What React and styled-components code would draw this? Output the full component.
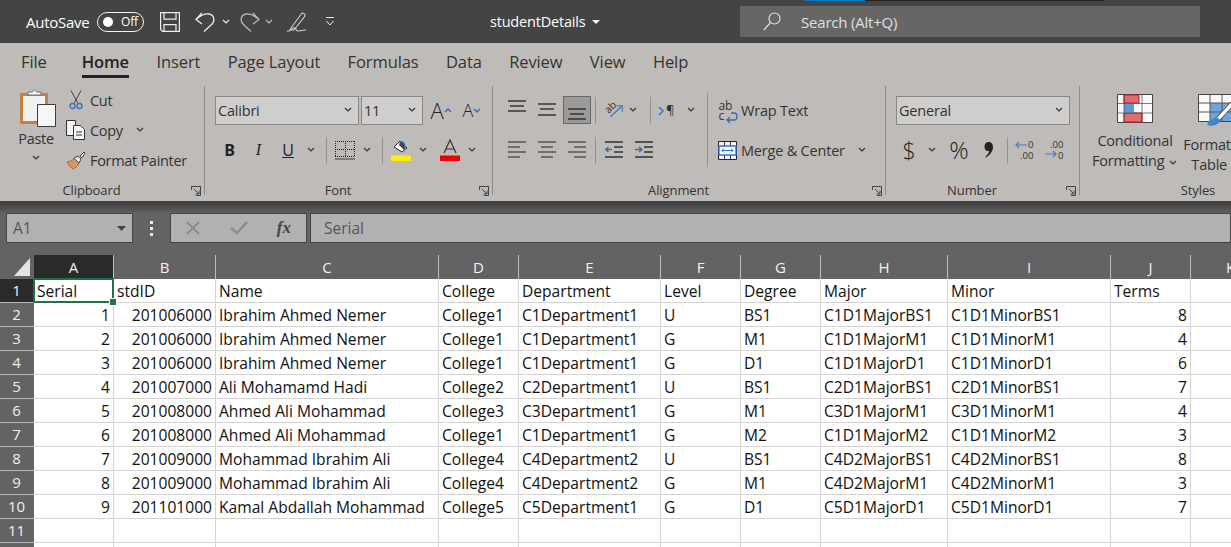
import React from "react";
import styled, { createGlobalStyle } from "styled-components";

const UI_FONT = `"Open Sans", "Noto Sans", "Liberation Sans", sans-serif`;

const GlobalStyle = createGlobalStyle`
  html, body { margin: 0; padding: 0; background: #fff; overflow: hidden; }
  body { font-family: ${UI_FONT}; }
  * { box-sizing: border-box; }
`;

const Page = styled.div`
  width: 1231px;
  height: 547px;
  overflow: hidden;
  position: relative;
`;

/* ---------- title bar ---------- */
const TitleBar = styled.div`
  height: 43px;
  background: #444444;
  color: #fff;
  display: flex;
  align-items: center;
  padding-left: 26px;
  position: relative;
`;
const ProgressStrip = styled.div`
  position: absolute;
  top: 0;
  left: 805px;
  width: 299px;
  height: 1px;
  background: linear-gradient(90deg, #0078d4 0 60px, #222 60px);
`;
const AutoSave = styled.span`
  font-size: 15px;
  width: 71px;
  letter-spacing: -0.25px;
`;
const Toggle = styled.div`
  width: 47px;
  height: 20px;
  border: 1.5px solid #f2f2f2;
  border-radius: 10px;
  display: flex;
  align-items: center;
  padding-left: 5px;
  gap: 8px;
  font-size: 12px;
  letter-spacing: -0.2px;
  &::before {
    content: "";
    width: 10px;
    height: 10px;
    border-radius: 50%;
    background: #fff;
  }
`;
const QuickIcon = styled.div`
  display: flex;
  align-items: center;
  justify-content: center;
  flex: none;
  width: ${(p) => p.$w}px;
  margin-left: ${(p) => p.$ml || 0}px;
`;
const FileName = styled.span`
  margin-left: 155px;
  font-size: 14.5px;
  width: 95px;
  white-space: nowrap;
  letter-spacing: -0.2px;
`;
const Caret = styled.span`
  width: 0;
  height: 0;
  border: 4px solid transparent;
  border-top: 4px solid #fff;
  border-bottom: 0;
  margin-left: 7px;
`;
const SearchBox = styled.div`
  margin-left: 140px;
  width: 460px;
  height: 31px;
  background: #666666;
  color: #e0e0e0;
  display: flex;
  align-items: center;
  padding-left: 23px;
  gap: 20px;
  font-size: 15px;
  letter-spacing: -0.2px;
`;

/* ---------- tabs ---------- */
const TabBar = styled.div`
  height: 37px;
  background: #bfbbb8;
  display: flex;
  padding-left: 21px;
  gap: 27.4px;
`;
const Tab = styled.div`
  height: 35px;
  padding-top: 8px;
  font-size: 16.5px;
  line-height: 22px;
  color: ${(p) => (p.$active ? "#222" : "#333")};
  font-weight: ${(p) => (p.$active ? 600 : 400)};
  letter-spacing: -0.1px;
  margin-left: ${(p) => p.$ml || 0}px;
  border-bottom: ${(p) => (p.$active ? "3px solid #222" : "0")};
`;

/* ---------- ribbon ---------- */
const Ribbon = styled.div`
  height: 121px;
  background: #bfbbb8;
  display: flex;
  padding-top: 6px;
  color: #333;
`;
const Group = styled.div`
  width: ${(p) => p.$w}px;
  flex: none;
  position: relative;
  &::after {
    content: "";
    position: absolute;
    right: 0;
    top: 0;
    width: 1px;
    height: 109px;
    background: ${(p) => (p.$last ? "transparent" : "#8f8c8a")};
  }
`;
const GroupBody = styled.div`
  height: 95px;
  display: flex;
  padding-left: ${(p) => p.$pl || 0}px;
`;
const GroupLabel = styled.div`
  height: 18px;
  line-height: 18px;
  font-size: 13px;
  text-align: center;
  color: #333;
  letter-spacing: -0.1px;
  padding-right: ${(p) => p.$pr || 0}px;
`;
const Launcher = styled.div`
  position: absolute;
  right: 4px;
  bottom: 5px;
  width: 10px;
  height: 10px;
  display: flex;
`;
const PasteColumn = styled.div`
  width: 36px;
  margin-left: 18px;
  display: flex;
  flex-direction: column;
  align-items: center;
  padding-top: 3px;
  font-size: 14.5px;
  letter-spacing: -0.3px;
  svg.big { margin-left: 4px; flex: none; }
  span { margin: 2px 0 6px; line-height: 20px; }
`;
const ClipList = styled.div`
  margin: -1px 0 0 11px;
  display: flex;
  flex-direction: column;
`;
const ClipRow = styled.div`
  height: 30px;
  display: flex;
  align-items: center;
  gap: 3px;
  font-size: 14.5px;
  letter-spacing: -0.3px;
`;
const ClipIcon = styled.div`
  width: 22px;
  display: flex;
  justify-content: center;
`;
const Stack = styled.div`
  display: flex;
  flex-direction: column;
  gap: 12px;
  padding-top: 10px;
`;
const ToolRow = styled.div`
  height: 28px;
  display: flex;
  align-items: center;
`;
const Slot = styled.div`
  flex: none;
  width: ${(p) => p.$w}px;
  height: 28px;
  margin-left: ${(p) => p.$ml || 0}px;
  display: flex;
  align-items: center;
  justify-content: center;
  color: #222;
  background: ${(p) => (p.$on ? "#9c9a98" : "transparent")};
  border: ${(p) => (p.$on ? "1px solid #6a6866" : "0")};
`;
const BoldGlyph = styled.span`
  font-size: 16px;
  font-family: ${(p) => (p.$i ? `"Liberation Serif", serif` : UI_FONT)};
  font-style: ${(p) => (p.$i ? "italic" : "normal")};
  text-decoration: ${(p) => (p.$u ? "underline" : "none")};
  font-weight: ${(p) => (p.$u || p.$i ? 400 : 700)};
`;
const BigGlyph = styled.span`
  font-size: ${(p) => p.$s}px;
  line-height: 1;
  font-weight: 300;
`;
const ToolSep = styled.div`
  flex: none;
  width: 1px;
  height: 27px;
  background: #959290;
  margin-left: ${(p) => p.$ml || 0}px;
`;
const TallSep = styled.div`
  flex: none;
  width: 1px;
  height: 74px;
  margin: 7px 0 0 4px;
  background: #959290;
`;
const Select = styled.div`
  flex: none;
  width: ${(p) => p.$w}px;
  margin-left: ${(p) => p.$ml || 0}px;
  height: 29px;
  background: #cfcecc;
  border: 1px solid #8a8886;
  display: flex;
  align-items: center;
  justify-content: space-between;
  padding: 0 5px 0 2px;
  font-size: 14.5px;
  letter-spacing: -0.2px;
  color: #333;
`;
const WideButton = styled.div`
  height: 28px;
  display: flex;
  align-items: center;
  font-size: 14.5px;
  letter-spacing: -0.2px;
  color: #333;
`;
const WideIcon = styled.div`
  width: 22px;
  margin: 0 2px 0 9px;
  display: flex;
  justify-content: center;
`;
const WideColumn = styled.div`
  display: flex;
  flex-direction: column;
  gap: 12px;
  padding-top: 10px;
`;
const StyleButton = styled.div`
  flex: none;
  width: ${(p) => p.$w}px;
  margin-left: ${(p) => p.$ml || 0}px;
  display: flex;
  flex-direction: column;
  align-items: center;
  font-size: 14.5px;
  line-height: 20px;
  white-space: nowrap;
  letter-spacing: -0.2px;
  padding-top: 8px;
  svg.big { margin-bottom: 8px; }
`;

/* ---------- formula bar ---------- */
const FormulaBar = styled.div`
  height: 54px;
  padding: 12px 0 0 6px;
  display: flex;
  align-items: flex-start;
  background: linear-gradient(#3c3c3c 0, #5c5c5c 11px, #636363 12px);
`;
const FormulaBox = styled.div`
  height: 30px;
  background: #b1b1b1;
  border: 1px solid #444;
  display: flex;
  align-items: center;
  color: #555;
  font-size: 15.5px;
  flex: ${(p) => (p.$grow ? 1 : "none")};
  width: ${(p) => (p.$w ? `${p.$w}px` : "auto")};
  margin-left: ${(p) => p.$ml || 0}px;
  padding: 0 ${(p) => p.$pr || 6}px 0 ${(p) => p.$pl || 6}px;
  justify-content: ${(p) => p.$justify || "flex-start"};
`;
const Dots = styled.div`
  width: 37px;
  height: 30px;
  display: flex;
  flex-direction: column;
  align-items: center;
  justify-content: center;
  gap: 3px;
  i { width: 3px; height: 3px; background: #eee; display: block; }
`;
const FxGlyph = styled.span`
  font: italic 700 17px "Liberation Serif", serif;
  color: #444;
`;

/* ---------- sheet ---------- */
const COLS = [
  ["A", 80], ["B", 102], ["C", 223], ["D", 80], ["E", 142], ["F", 80],
  ["G", 80], ["H", 127], ["I", 163], ["J", 80], ["K", 80],
];

const Sheet = styled.div`
  display: grid;
  grid-template-columns: 34px ${COLS.map((c) => `${c[1]}px`).join(" ")};
  grid-auto-rows: 24px;
  background: #fff;
  font-size: 15.6px;
`;
const Corner = styled.div`
  background: #636363;
  position: relative;
  &::after {
    content: "";
    position: absolute;
    left: 14px;
    top: 3px;
    width: 16px;
    height: 18px;
    background: #e4e4e4;
    clip-path: polygon(100% 0, 100% 100%, 0 100%);
  }
`;
const ColHead = styled.div`
  background: ${(p) => (p.$on ? "#2a2a2a" : "#636363")};
  color: #f0f0f0;
  border-right: 1px solid #bdbdbd;
  text-align: center;
  line-height: 24px;
  font-size: 15px;
`;
const RowHead = styled.div`
  background: ${(p) => (p.$on ? "#2a2a2a" : "#636363")};
  color: #f0f0f0;
  border-bottom: 1px solid #b8b8b8;
  text-align: center;
  line-height: 23px;
  font-size: 15px;
  padding-right: 1px;
`;
const Cell = styled.div`
  border-right: 1px solid #d4d4d4;
  border-bottom: 1px solid #d4d4d4;
  line-height: 24px;
  padding: 0 3px;
  white-space: nowrap;
  overflow: hidden;
  color: #111;
  text-align: ${(p) => (p.$num ? "right" : "left")};
`;
const SelectedCell = styled(Cell)`
  position: relative;
  overflow: visible;
  z-index: 1;
  &::before {
    content: "";
    position: absolute;
    left: -1px;
    top: -1px;
    right: -1px;
    bottom: -1px;
    border: 2px solid #217346;
  }
  &::after {
    content: "";
    position: absolute;
    right: -3px;
    bottom: -3px;
    width: 6px;
    height: 6px;
    background: #217346;
    border: 1px solid #fff;
    box-sizing: content-box;
    margin: -1px;
  }
`;

/* ---------- icons ---------- */
const Chev = ({ c = "#333" }) => (
  <svg width="10" height="6" viewBox="0 0 10 6"><path d="M2 1l3 3 3-3" fill="none" stroke={c} strokeWidth="1.2" /></svg>
);
const LaunchIcon = () => (
  <svg width="10" height="10" viewBox="0 0 10 10"><path d="M.5 4V.5h9v9H5M3 3l5 5M8 4.5V8H4.5" fill="none" stroke="#444" /></svg>
);
const SaveIcon = () => (
  <svg width="20" height="20" viewBox="0 0 20 20" fill="none" stroke="#eee" strokeWidth="1.2"><path d="M.6.6h18.8v18.8H2.6l-2-2zM4 .6v6.6h12V.6M4 19.4v-6.8h12v6.8" /></svg>
);
const UndoIcon = ({ c = "#eee", flip }) => (
  <svg width="20" height="20" viewBox="0 0 20 20" fill="none" stroke={c} strokeWidth="1.3" transform={flip ? "scale(-1 1)" : undefined}>
    <path d="M1 7.500C5 4 10 1.500 14 2c6 1 6 8 2 11l-7 6.500M7 1L1 7.500 7 12" />
  </svg>
);
const PenIcon = () => (
  <svg width="21" height="20" viewBox="0 0 21 20" fill="none" stroke="#ccc" strokeWidth="1.1">
    <path d="M5 16L16 1c2 0 3 1 3 3L8 18H4zM1 19c4 1 5-4 8-3 2 1 0 3 3 3 2 0 3-1 8-1" />
  </svg>
);
const CustomizeIcon = () => (
  <svg width="10" height="9" viewBox="0 0 10 9"><path d="M1 .5h8" stroke="#eee" /><path d="M1.500 4l3.500 4 3.500-4" fill="none" stroke="#eee" /></svg>
);
const SearchIcon = () => (
  <svg width="18" height="19" viewBox="0 0 18 19" fill="none" stroke="#ddd" strokeWidth="1.2"><circle cx="11.5" cy="6.5" r="5.5" /><path d="M7.500 10.500L.8 18" /></svg>
);
const PasteIcon = () => (
  <svg className="big" width="36" height="38" viewBox="0 0 36 38">
    <path d="M1.500 5.500h25v28h-25z" fill="#eff2f0" stroke="#c57f45" strokeWidth="3" />
    <path d="M8 6V3h4.500c0-2.500 4-2.500 4 0H21v3z" fill="#fafafa" stroke="#6e6e6e" />
    <path d="M17.500 15.500h18v22h-18z" fill="#f5f7f6" stroke="#3c3c3c" />
  </svg>
);
const CutIcon = () => (
  <svg width="14" height="20" viewBox="0 0 14 20" fill="none">
    <path d="M2 .5l7 13M12 .5l-7 13" stroke="#444" />
    <circle cx="3.500" cy="16" r="2.500" stroke="#3a74bb" strokeWidth="1.4" />
    <circle cx="10.500" cy="16" r="2.500" stroke="#3a74bb" strokeWidth="1.4" />
  </svg>
);
const CopyIcon = () => (
  <svg width="20" height="20" viewBox="0 0 20 20" fill="#f4f4f4" stroke="#333">
    <path d="M.5.5h9v15h-9z" />
    <path d="M7.500 5.500h7l4 4v10h-11z" />
    <path d="M10 12h6M10 15h6" />
  </svg>
);
const BrushIcon = () => (
  <svg width="20" height="19" viewBox="0 0 20 19">
    <path d="M1 11c3 0 6-2 7-4l5 5c-1 3-4 5-6 6-1-1-2-1-3-3-1 0-2-2-3-4z" fill="#d29a62" stroke="#a86a30" />
    <path d="M8 7l4-2 3 3-2 4z" fill="#f3f3f3" stroke="#444" />
    <path d="M14 5l4-4 1 1-3 5z" fill="#f3f3f3" stroke="#444" />
  </svg>
);
const GrowIcon = ({ up }) => (
  <svg width="8" height="5" viewBox="0 0 8 5"><path d={up ? "M1 4l3-3 3 3" : "M1 1l3 3 3-3"} fill="none" stroke="#2f6db3" strokeWidth="1.3" /></svg>
);
const BordersIcon = () => (
  <svg width="20" height="19" viewBox="0 0 20 19" fill="none" stroke="#222">
    <path d="M0 .5h20M0 15.500h20M.5 0v16M19.500 0v16M10.500 0v16M0 8.500h20" strokeDasharray="1 1" />
    <path d="M0 18h20" strokeWidth="1.500" stroke="#666" />
  </svg>
);
const FillIcon = () => (
  <svg width="20" height="22" viewBox="0 0 20 22">
    <path d="M3 8l6-6 7 7-5 4z" fill="#fff" stroke="#222" />
    <path d="M9 2l6 6-2 3-5-5z" fill="#444" />
    <path d="M14 8c0-4-3-6-5-5" fill="none" stroke="#2f6db3" strokeWidth="1.400" />
    <path d="M0 16.500h20V22H0z" fill="#ffee00" />
  </svg>
);
const ColorAIcon = () => (
  <svg width="20" height="22" viewBox="0 0 20 22">
    <path d="M4 14L10 1l6 13M6 10h8" fill="none" stroke="#333" strokeWidth="1.200" />
    <path d="M0 16.500h20V22H0z" fill="#f00000" />
  </svg>
);
const CommaIcon = () => (
  <svg width="10" height="16" viewBox="0 0 10 16"><path d="M4.500 0C7.500 0 9 2 9 5c0 4-3 8-7 10.500l-.6-.8C3.500 12.500 5 11 5.300 9 2.500 9.500.5 7.500.5 4.700.5 2 2.300 0 4.500 0z" fill="#222" /></svg>
);
const Lines = ({ ys, c = "#222", inset = [] }) => (
  <svg width="19" height="20" viewBox="0 0 19 20" stroke={c} strokeWidth="1.300">
    {ys.map((y, i) => <path key={y} d={`M${inset[i] ? inset[i][0] : 0} ${y}H${inset[i] ? inset[i][1] : 18}`} />)}
  </svg>
);
const OrientIcon = () => (
  <svg width="26" height="26" viewBox="0 0 26 26" fill="none">
    <path d="M10 21L24 8M17 8h7v7" stroke="#3a74bb" strokeWidth="1.300" />
    <text x="10" y="14" fontSize="12" fill="#333" textAnchor="middle" transform="rotate(-45 10 10)" fontFamily="Open Sans">ab</text>
  </svg>
);
const IndentLines = ({ flip }) => (
  <svg width="19" height="18" viewBox="0 0 19 18" fill="none">
    <path d="M0 1h18M9 6h9M9 11h9M0 16h18" stroke="#333" strokeWidth="1.300" />
    <path d={flip ? "M0 8.500h6M4 6l3 2.500L4 11" : "M7 8.500H1M3.500 6L.8 8.500 3.500 11"} stroke="#2f6db3" strokeWidth="1.300" />
  </svg>
);
const ParaIcon = () => (
  <svg width="20" height="22" viewBox="0 0 20 22" fill="none">
    <path d="M1 8l4 4-4 4" stroke="#2f7ad1" strokeWidth="1.500" />
    <text x="8" y="16" fontSize="13" fill="#333" fontFamily="Open Sans">¶</text>
  </svg>
);
const WrapIcon = () => (
  <svg width="22" height="28" viewBox="0 0 22 28" fill="none">
    <text fontSize="12" fill="#333" fontFamily="Open Sans">
      <tspan x="1.500" y="14">ab</tspan>
      <tspan x="1.500" y="24">c</tspan>
    </text>
    <path d="M14 17h3c4 0 4 7 0 7h-7M13 21l-3 3 3 3" stroke="#2f6db3" strokeWidth="1.300" />
  </svg>
);
const MergeIcon = () => (
  <svg width="20" height="19" viewBox="0 0 20 19">
    <path d="M.5.500h18v18H.5z" fill="#f3f5f6" stroke="#222" />
    <path d="M6.500 0v5M12.500 0v5M6.500 14v5M12.500 14v5" stroke="#333" />
    <path d="M1 5h17v9H1z" fill="#fbfdff" stroke="#2f74c4" strokeWidth="1.400" />
    <path d="M4 9.500h11M6 7.500l-2 2 2 2M13 7.500l2 2-2 2" fill="none" stroke="#2f74c4" />
  </svg>
);
const DecimalIcon = ({ more }) => (
  <svg width="24" height="26" viewBox="0 0 24 26" fill="none">
    <text x={more ? 7 : 15} y="11" fontSize="9.500" fill="#333" fontFamily="Open Sans">{more ? ".00" : "0"}</text>
    <text x={more ? 15 : 7} y="22" fontSize="9.500" fill="#333" fontFamily="Open Sans">{more ? "0" : ".00"}</text>
    <path d={more ? "M2 17h11M10 14l3 3-3 3" : "M14 8H3M6 5L3 8l3 3"} stroke="#3a7cd0" strokeWidth="1.200" />
  </svg>
);
const ConditionalIcon = () => (
  <svg className="big" width="36" height="29" viewBox="0 0 36 29">
    <path d="M.5.500h35v28H.5z" fill="#fafafa" stroke="#444" />
    <path d="M7 1h15v8H7zM7 19h18v9H7z" fill="#e06c6c" stroke="#b81f1f" />
    <path d="M7 10h10v9H7z" fill="#5b9bd5" />
    <path d="M7 0v29M25 0v29M0 9.500h36M0 19h36" stroke="#444" strokeOpacity=".7" />
  </svg>
);
const FormatTableIcon = () => (
  <svg className="big" width="36" height="33" viewBox="0 0 36 33">
    <path d="M.5.500h34v27H.5z" fill="#fafafa" stroke="#444" />
    <path d="M12 9h23v18H12z" fill="#6ca6dc" />
    <path d="M12 0v28M24 0v28M0 9h35M0 18h35" stroke="#555" />
    <path d="M12 30c1-4 4-5 7-7l14-15 3 3-14 15c-2 4-6 6-10 4z" fill="#fff" stroke="#444" />
    <path d="M9 31c2-5 6-7 10-8l3 3c-2 4-8 7-13 5z" fill="#3a8ad0" />
  </svg>
);
const CancelIcon = () => (
  <svg width="16" height="16" viewBox="0 0 16 16"><path d="M2 2l12 12M14 2L2 14" stroke="#8c8c8c" strokeWidth="2" /></svg>
);
const CheckIcon = () => (
  <svg width="18" height="14" viewBox="0 0 18 14"><path d="M1 7l6 5L17 1" fill="none" stroke="#8c8c8c" strokeWidth="2.500" /></svg>
);
const DropArrow = () => (
  <svg width="9" height="5" viewBox="0 0 9 5"><path d="M0 0h9L4.500 5z" fill="#444" /></svg>
);

/* ---------- data ---------- */
const DATA = [
  [1, 201006000, "Ibrahim Ahmed Nemer", "College1", "C1Department1", "U", "BS1", "C1D1MajorBS1", "C1D1MinorBS1", 8],
  [2, 201006000, "Ibrahim Ahmed Nemer", "College1", "C1Department1", "G", "M1", "C1D1MajorM1", "C1D1MinorM1", 4],
  [3, 201006000, "Ibrahim Ahmed Nemer", "College1", "C1Department1", "G", "D1", "C1D1MajorD1", "C1D1MinorD1", 6],
  [4, 201007000, "Ali Mohamamd Hadi", "College2", "C2Department1", "U", "BS1", "C2D1MajorBS1", "C2D1MinorBS1", 7],
  [5, 201008000, "Ahmed Ali Mohammad", "College3", "C3Department1", "G", "M1", "C3D1MajorM1", "C3D1MinorM1", 4],
  [6, 201008000, "Ahmed Ali Mohammad", "College1", "C1Department1", "G", "M2", "C1D1MajorM2", "C1D1MinorM2", 3],
  [7, 201009000, "Mohammad Ibrahim Ali", "College4", "C4Department2", "U", "BS1", "C4D2MajorBS1", "C4D2MinorBS1", 8],
  [8, 201009000, "Mohammad Ibrahim Ali", "College4", "C4Department2", "G", "M1", "C4D2MajorM1", "C4D2MinorM1", 3],
  [9, 201101000, "Kamal Abdallah Mohammad", "College5", "C5Department1", "G", "D1", "C5D1MajorD1", "C5D1MinorD1", 7],
];
const HEADERS = ["Serial", "stdID", "Name", "College", "Department", "Level", "Degree", "Major", "Minor", "Terms", ""];
const TABS = ["File", "Home", "Insert", "Page Layout", "Formulas", "Data", "Review", "View", "Help"];

const TOP = [[0, 18], [2, 16], [0, 18]];
const ALIGN_V = {
  top: [1, 6, 11],
  mid: [4, 9, 15],
  bot: [9, 14, 19],
};

export default function App() {
  return (
    <Page>
      <GlobalStyle />
      <TitleBar>
        <ProgressStrip />
        <AutoSave>AutoSave</AutoSave>
        <Toggle>Off</Toggle>
        <QuickIcon $w={20} $ml={16}><SaveIcon /></QuickIcon>
        <QuickIcon $w={20} $ml={15}><UndoIcon /></QuickIcon>
        <QuickIcon $w={10} $ml={6}><Chev c="#eee" /></QuickIcon>
        <QuickIcon $w={20} $ml={9}><UndoIcon c="#bbb" flip /></QuickIcon>
        <QuickIcon $w={10} $ml={4}><Chev c="#bbb" /></QuickIcon>
        <QuickIcon $w={21} $ml={12}><PenIcon /></QuickIcon>
        <QuickIcon $w={10} $ml={18}><CustomizeIcon /></QuickIcon>
        <FileName>studentDetails</FileName>
        <Caret />
        <SearchBox><SearchIcon />Search (Alt+Q)</SearchBox>
      </TitleBar>

      <TabBar>
        {TABS.map((t) => <Tab key={t} $active={t === "Home"} $ml={t === "Home" ? 7.6 : 0}>{t}</Tab>)}
      </TabBar>

      <Ribbon>
        <Group $w={205}>
          <GroupBody>
            <PasteColumn>
              <PasteIcon />
              <span>Paste</span>
              <Chev />
            </PasteColumn>
            <ClipList>
              <ClipRow><ClipIcon><CutIcon /></ClipIcon>Cut</ClipRow>
              <ClipRow><ClipIcon><CopyIcon /></ClipIcon>Copy<QuickIcon $w={10} $ml={9}><Chev /></QuickIcon></ClipRow>
              <ClipRow><ClipIcon><BrushIcon /></ClipIcon>Format Painter</ClipRow>
            </ClipList>
          </GroupBody>
          <GroupLabel $pr={22}>Clipboard</GroupLabel>
          <Launcher><LaunchIcon /></Launcher>
        </Group>

        <Group $w={288}>
          <GroupBody $pl={10}>
            <Stack>
              <ToolRow>
                <Select $w={144}>Calibri<Chev /></Select>
                <Select $w={62} $ml={2}>11<Chev /></Select>
                <Slot $w={32} $ml={2}><BigGlyph $s={22}>A</BigGlyph><GrowIcon up /></Slot>
                <Slot $w={30}><BigGlyph $s={18}>A</BigGlyph><GrowIcon /></Slot>
              </ToolRow>
              <ToolRow>
                <Slot $w={29}><BoldGlyph>B</BoldGlyph></Slot>
                <Slot $w={29}><BoldGlyph $i>I</BoldGlyph></Slot>
                <Slot $w={30}><BoldGlyph $u>U</BoldGlyph></Slot>
                <Slot $w={16}><Chev /></Slot>
                <ToolSep $ml={7} />
                <Slot $w={22} $ml={7}><BordersIcon /></Slot>
                <Slot $w={22}><Chev /></Slot>
                <ToolSep $ml={4} />
                <Slot $w={28} $ml={4}><FillIcon /></Slot>
                <Slot $w={16}><Chev /></Slot>
                <Slot $w={28} $ml={5}><ColorAIcon /></Slot>
                <Slot $w={16}><Chev /></Slot>
              </ToolRow>
            </Stack>
          </GroupBody>
          <GroupLabel $pr={22}>Font</GroupLabel>
          <Launcher><LaunchIcon /></Launcher>
        </Group>

        <Group $w={393}>
          <GroupBody $pl={10}>
            <Stack>
              <ToolRow>
                <Slot $w={28}><Lines ys={ALIGN_V.top} inset={TOP} /></Slot>
                <Slot $w={28} $ml={2}><Lines ys={ALIGN_V.mid} inset={TOP} /></Slot>
                <Slot $w={28} $ml={2} $on><Lines ys={ALIGN_V.bot} inset={TOP} /></Slot>
                <ToolSep $ml={4} />
                <Slot $w={22} $ml={6}><OrientIcon /></Slot>
                <Slot $w={18}><Chev /></Slot>
                <ToolSep $ml={8} />
                <Slot $w={22} $ml={6}><ParaIcon /></Slot>
                <Slot $w={24}><Chev /></Slot>
              </ToolRow>
              <ToolRow>
                <Slot $w={28}><Lines c="#444" ys={[2, 7, 12, 17]} inset={[[0, 18], [0, 12], [0, 18], [0, 12]]} /></Slot>
                <Slot $w={28} $ml={2}><Lines c="#444" ys={[2, 7, 12, 17]} inset={[[0, 18], [3, 15], [0, 18], [3, 15]]} /></Slot>
                <Slot $w={28} $ml={2}><Lines c="#444" ys={[2, 7, 12, 17]} inset={[[0, 18], [6, 18], [0, 18], [6, 18]]} /></Slot>
                <ToolSep $ml={4} />
                <Slot $w={28} $ml={4}><IndentLines /></Slot>
                <Slot $w={28} $ml={2}><IndentLines flip /></Slot>
              </ToolRow>
            </Stack>
            <TallSep />
            <WideColumn>
              <WideButton><WideIcon><WrapIcon /></WideIcon>Wrap Text</WideButton>
              <WideButton>
                <WideIcon><MergeIcon /></WideIcon>Merge &amp; Center
                <QuickIcon $w={10} $ml={12}><Chev /></QuickIcon>
              </WideButton>
            </WideColumn>
          </GroupBody>
          <GroupLabel $pr={22}>Alignment</GroupLabel>
          <Launcher><LaunchIcon /></Launcher>
        </Group>

        <Group $w={194}>
          <GroupBody $pl={10}>
            <Stack>
              <ToolRow><Select $w={174}>General<Chev /></Select></ToolRow>
              <ToolRow>
                <Slot $w={26}><BigGlyph $s={23}>$</BigGlyph></Slot>
                <Slot $w={20}><Chev /></Slot>
                <Slot $w={34}><BigGlyph $s={24}>%</BigGlyph></Slot>
                <Slot $w={26}><CommaIcon /></Slot>
                <ToolSep $ml={5} />
                <Slot $w={30} $ml={2}><DecimalIcon /></Slot>
                <Slot $w={30}><DecimalIcon more /></Slot>
              </ToolRow>
            </Stack>
          </GroupBody>
          <GroupLabel $pr={22}>Number</GroupLabel>
          <Launcher><LaunchIcon /></Launcher>
        </Group>

        <Group $w={236} $last>
          <GroupBody>
            <StyleButton $w={90} $ml={10}>
              <ConditionalIcon />
              Conditional
              <span>Formatting <Chev /></span>
            </StyleButton>
            <StyleButton $w={72}>
              <FormatTableIcon />
              Format as
              <span>Table <Chev /></span>
            </StyleButton>
          </GroupBody>
          <GroupLabel>Styles</GroupLabel>
        </Group>
      </Ribbon>

      <FormulaBar>
        <FormulaBox $w={127} $justify="space-between" $pl={6}>A1<DropArrow /></FormulaBox>
        <Dots><i /><i /><i /></Dots>
        <FormulaBox $w={137} $justify="space-between" $pl={14} $pr={15}>
          <CancelIcon /><CheckIcon /><FxGlyph>fx</FxGlyph>
        </FormulaBox>
        <FormulaBox $grow $ml={3} $pl={13}>Serial</FormulaBox>
      </FormulaBar>

      <Sheet>
        <Corner />
        {COLS.map(([name], i) => <ColHead key={name} $on={i === 0}>{name}</ColHead>)}

        <RowHead $on>1</RowHead>
        {HEADERS.map((h, i) =>
          i === 0
            ? <SelectedCell key={i}>{h}</SelectedCell>
            : <Cell key={i}>{h}</Cell>
        )}

        {DATA.map((row, r) => (
          <React.Fragment key={r}>
            <RowHead>{r + 2}</RowHead>
            {row.map((v, c) => <Cell key={c} $num={typeof v === "number"}>{v}</Cell>)}
            <Cell />
          </React.Fragment>
        ))}

        {[11, 12].map((n) => (
          <React.Fragment key={n}>
            <RowHead>{n}</RowHead>
            {COLS.map(([name]) => <Cell key={name} />)}
          </React.Fragment>
        ))}
      </Sheet>
    </Page>
  );
}
